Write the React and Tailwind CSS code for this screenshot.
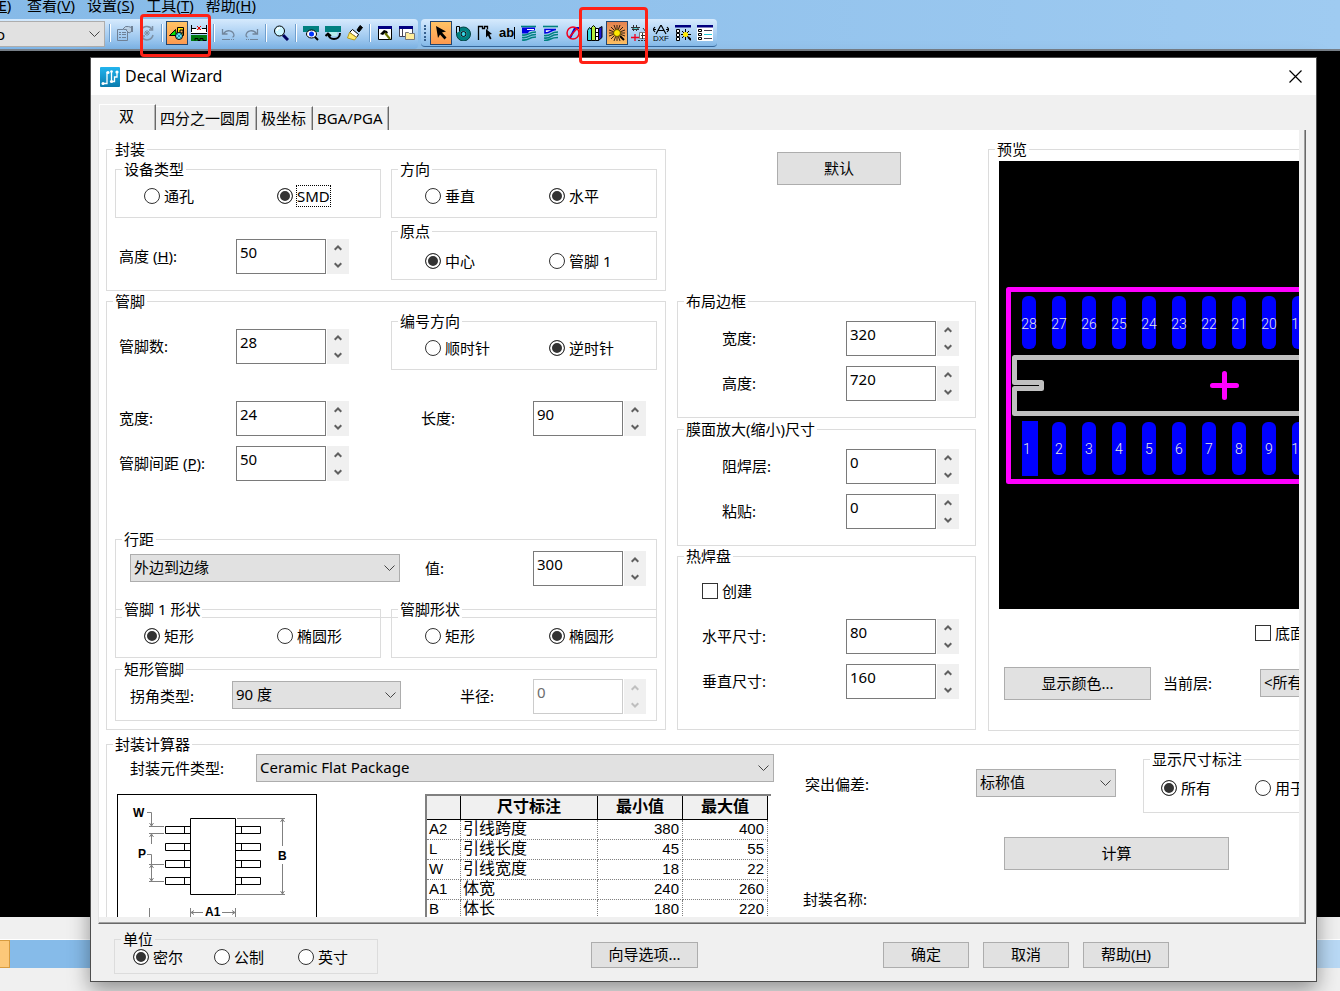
import React, { useState } from 'react'

const icons = {
  properties: (
    <g fill="none" stroke="#6f8196">
      <path d="M.5 4.500h10v11H.5zM2 7.500h2M5 7.500h4M2 9.500h2M5 9.500h4M2 12.500h2M5 12.500h4" />
      <path d="M5.500 4.500l3-3h3l3 1M9 5l3 3 2.500-1.500V1.500" fill="#b9cde0" />
      <path d="M15 1v6" strokeWidth="2" />
    </g>
  ),
  refresh: (
    <g fill="none" stroke="#7d90a5" strokeWidth="1.500">
      <path d="M2 6a6 6 0 0 1 11-1.500M14 10a6 6 0 0 1-11 2" />
      <path d="M13.500 1v4H10M2.500 15v-4H6" />
      <path d="M8 5v6M5 8h6M6 6l4 4M10 6l-4 4" strokeWidth="1" />
    </g>
  ),
  shapes: (
    <g stroke="#000">
      <path d="M8.500 2.500h6v8h-6z" fill="#ffe800" />
      <path d="M11 5h3v3h-3z" fill="#fcb45c" />
      <path d="M.5 10.500l6-6 1 6z" fill="#00e000" />
      <circle cx="10" cy="11" r="3.500" fill="#5fe3f5" />
      <path d="M8 9l4 4M12 9l-4 4" stroke="#007c8c" strokeWidth=".7" />
    </g>
  ),
  board: (
    <g fill="none" stroke="#000">
      <path d="M0 4h16v4H0z" fill="#fff" stroke="none" />
      <path d="M.5 0v7M15.500 0v7M0 3.500h5M11 3.500h5M0 8.500h16" />
      <path d="M6 1l4 4M10 1L6 5M8 2v3" stroke="#e00000" />
      <path d="M0 10h16v6H0z" fill="#007a10" stroke="none" />
      <path d="M4 15.500v-2h3v2h2v-2h3v2h3" />
    </g>
  ),
  undo: (
    <g fill="none" stroke="#71859b">
      <path d="M2 9l1-1a5.500 5 0 0 1 10 2c0 1-.5 2-1.500 2M1.500 4v5h5" strokeWidth="1.300" />
      <path d="M1 14.500h8M10 14.500h1M12 14.500h1" />
    </g>
  ),
  redo: (
    <g fill="none" stroke="#71859b">
      <path d="M14 9l-1-1A5.500 5 0 0 0 3 10c0 1 .5 2 1.500 2M14.500 4v5h-5" strokeWidth="1.300" />
      <path d="M15 14.500H7M6 14.500H5M4 14.500H3" />
    </g>
  ),
  zoom: (
    <g fill="none">
      <path d="M10 10l5 5" stroke="#000060" strokeWidth="3" />
      <circle cx="6.500" cy="6" r="5" fill="#c9f4ff" stroke="#000" />
      <path d="M4 6a3 3 0 0 1 3-3" stroke="#fff" strokeWidth="1.500" />
    </g>
  ),
  layerView: (
    <g>
      <path d="M0 1h16v6H0z" fill="#008080" />
      <ellipse cx="8.500" cy="9" rx="5" ry="4" fill="#fff" stroke="#000" />
      <circle cx="8.500" cy="9" r="2.500" fill="#0033ff" />
      <path d="M12 12l3 3" stroke="#000" strokeWidth="2" />
    </g>
  ),
  layerTurn: (
    <g>
      <path d="M0 1h16v6H0z" fill="#008080" />
      <path d="M4 7h8v4H4z" fill="#b7eded" />
      <path d="M3 8c0 8 12 8 12 0M.5 11L3 8.500 6 11" fill="none" stroke="#000" strokeWidth="2" />
    </g>
  ),
  brush: (
    <g stroke="#000">
      <path d="M10 5l3-4.500 2.500 2L12 7z" fill="#000" />
      <path d="M5.500 4.500l6 5-2 3-7-5z" fill="#fff" />
      <path d="M2.500 7.500l7 5-2 2.500L.5 13z" fill="#ffe96b" stroke="#b59a20" />
    </g>
  ),
  hammer: (
    <g>
      <path d="M1.500 2.500h13v12h-13z" fill="#fff" stroke="#000" />
      <path d="M1 1h14v3H1z" fill="#000080" />
      <path d="M3 9l4-4 3 1 1 2-2 1-1-1-2 2z" fill="#000" />
      <path d="M8 8l5 6" stroke="#6c7700" strokeWidth="2" />
    </g>
  ),
  windowFolder: (
    <g>
      <path d="M.5 1.500h13v10H.5z" fill="#fff" stroke="#445" />
      <path d="M0 1h14v3H0z" fill="#000080" />
      <path d="M3.500 4v8" stroke="#445" />
      <path d="M6.500 14.500v-7h3l1 1h5v6z" fill="#ffed9a" stroke="#777" />
    </g>
  ),
  pointer: <path d="M3 1l10 5.500-4 1 4.500 5-2 2L7 9.500 5 13z" fill="#000" />,
  donut: (
    <g fill="none">
      <circle cx="8.500" cy="9" r="5" stroke="#008080" strokeWidth="4" />
      <circle cx="8.500" cy="9" r="2.500" fill="#38d4e4" stroke="#000" />
      <circle cx="8.500" cy="9" r="7" stroke="#003f3f" />
      <path d="M1.500 8V1.500h3v5" fill="#b9dcf7" stroke="#000" />
    </g>
  ),
  outline: (
    <g fill="none" stroke="#000">
      <path d="M1.500 15V1.500h4v2h2v-2h3v3" strokeWidth="1.300" />
      <path d="M9 4l6 5-2.500.5 2 4-1.500 1-2-4-2 2z" fill="#000" stroke="none" />
    </g>
  ),
  flood: (
    <g fill="none" stroke="#008080" strokeWidth="1.600">
      <path d="M0 1.500h15" />
      <path d="M1 2.500h13v3c-4 0-6 0-7 3H1z" fill="#0000e0" stroke="none" />
      <path d="M6 4.500h7" stroke="#fff" strokeWidth="1" />
      <path d="M1 10c8 1 5-3 14-3M1 12.500c8 1 5-3 14-3M1 15c8 1 5-3 14-3" />
    </g>
  ),
  floodAlt: (
    <g fill="none" stroke="#008080" strokeWidth="1.600">
      <path d="M0 1.500h15" />
      <path d="M2 8V4.500h11c-5 0-5 3.500-11 3.500z" fill="#fff" stroke="#0000e0" />
      <path d="M1 10.500c8 1 5-3.500 14-3.500M1 13c8 1 5-3.500 14-3.500M1 15.500c8 0 5-3 14-3" />
    </g>
  ),
  forbid: (
    <g fill="none">
      <path d="M5 13L10 3h4" stroke="#0000d0" strokeWidth="2" />
      <circle cx="8" cy="8" r="6" stroke="#f00020" strokeWidth="1.500" />
      <path d="M12 3.500L4 12.500" stroke="#f00020" strokeWidth="1.500" />
    </g>
  ),
  books: (
    <g stroke="#000">
      <path d="M.5 5.500l2-3 2 2v11h-4z" fill="#37d7dc" />
      <path d="M4.500 2.500l2-2 2 2v13h-4z" fill="#b7ef3e" />
      <path d="M8.500 3.500h3v12h-3z" fill="#fff" />
      <path d="M11.500 3.500l3.500-2v11l-3.500 3z" fill="#1a1ad0" />
      <path d="M9 7.500h2M9 11.500h2" />
    </g>
  ),
  spark: (
    <g>
      <path d="M8 0v16M0 8h16M2 2l12 12M14 2L2 14M5 0l6 16M11 0L5 16M0 5l16 6M0 11l16-6" stroke="#000" strokeWidth=".8" />
      <circle cx="8" cy="8" r="3.500" fill="#ffe900" stroke="#6c5000" />
      <path d="M11 11l4 4" stroke="#000" strokeWidth="2" />
    </g>
  ),
  wizardParts: (
    <g fill="none" stroke="#333">
      <path d="M8.500 7.500h6v6h-6z" fill="#fff" stroke="#777" />
      <path d="M0 2.500h9M1 4.500h7M2.500 0v6M5.500 0v6M12 3l3 4M10 10.500h4M11.500 8v6" />
      <path d="M2 2.500h5v2H2z" fill="#52d6d6" />
      <path d="M0 12.500h8M4 9v7" stroke="#f00020" strokeWidth="1.300" />
      <path d="M7 15.500h9" strokeDasharray="2 1" />
    </g>
  ),
  dxf: (
    <g>
      <path d="M0 4.500h3M13 4.500h3M8 0L3 9M8 0l5 9M5 5.500h6M2 2l-2 2.500L2 7M14 2l2 2.500L14 7" fill="none" stroke="#000" strokeWidth="1.200" />
      <text x="8" y="16" textAnchor="middle" fontSize="8" fontFamily="Liberation Sans, sans-serif">DXF</text>
    </g>
  ),
  listSpark: (
    <g>
      <path d="M0 0h16v2.500H0z" fill="#000080" />
      <path d="M1.500 4.500h3v3h-3zM1.500 8.500h3v3h-3zM1.500 12.500h3v3h-3z" fill="#fff" stroke="#000" />
      <path d="M10.500 4v11M6 9.500h10M7 6l7 7M14 6l-7 7" stroke="#000" />
      <circle cx="10.500" cy="9.500" r="2.500" fill="#ffe900" />
      <path d="M13 12l3 3" stroke="#000" strokeWidth="2" />
    </g>
  ),
  list: (
    <g>
      <path d="M0 0h16v16H0z" fill="#fff" />
      <path d="M0 0h16v2.500H0z" fill="#000080" />
      <path d="M1.500 4.500h3v2h-3zM1.500 8.500h3v2h-3zM1.500 12.500h3v2h-3z" fill="#fff" stroke="#000" />
      <path d="M7 5.500h8M7 13.500h8" stroke="#445" />
      <path d="M7 9.500h8" stroke="#20c8d8" />
    </g>
  ),
}

const mainTools = [
  ['properties', 'refresh'],
  ['shapes', 'board'],
  ['undo', 'redo'],
  ['zoom'],
  ['layerView', 'layerTurn', 'brush'],
  ['hammer', 'windowFolder'],
]

const drawTools = [
  'pointer', 'donut', 'outline', 'text', 'flood', 'floodAlt', 'forbid',
  'books', 'spark', 'wizardParts', 'dxf', 'listSpark', 'list',
]

const activeTools = {
  shapes: 'border border-[#24466e] bg-gradient-to-b from-[#ffc365] to-[#ff9a50]',
  pointer: 'border border-[#24466e] bg-gradient-to-b from-[#ffc365] to-[#ff9a50]',
  spark: 'border border-[#24466e] bg-gradient-to-b from-[#e58350] to-[#fdbf62]',
}

const dimensions = [
  ['A2', '引线跨度', 380, 400],
  ['L', '引线长度', 45, 55],
  ['W', '引线宽度', 18, 22],
  ['A1', '体宽', 240, 260],
  ['B', '体长', 180, 220],
]

function ToolButton({ name }) {
  return (
    <button
      aria-label={name}
      className={`flex h-6 w-[22px] shrink-0 items-center justify-center ${activeTools[name] || ''}`}
    >
      {name === 'text' ? (
        <span className="border-r border-black font-['Liberation_Sans',sans-serif] text-[13px] leading-3 font-bold">ab</span>
      ) : (
        <svg className="h-4 w-4 shrink-0" viewBox="0 0 16 16">{icons[name]}</svg>
      )}
    </button>
  )
}

function MenuItem({ text, hotkey, className = '' }) {
  return (
    <button className={`whitespace-nowrap ${className}`}>
      {text}(<u>{hotkey}</u>)
    </button>
  )
}

function Group({ title, legendClass = 'bg-white', className = '', bodyClass = '', children }) {
  return (
    <fieldset className={`min-w-0 border border-[#dcdcdc] ${className}`}>
      <legend className={`ml-1.5 px-0.5 leading-[19px] whitespace-nowrap ${legendClass}`}>{title}</legend>
      <div className={bodyClass}>{children}</div>
    </fieldset>
  )
}

function Radio({ name, label, checked, focused, className = '' }) {
  return (
    <label className={`flex h-5 shrink-0 items-center gap-1 whitespace-nowrap ${className}`}>
      <input
        type="radio"
        name={name}
        defaultChecked={checked}
        className="h-4 w-4 shrink-0 appearance-none rounded-full border border-[#333] bg-white checked:bg-[#333] checked:shadow-[inset_0_0_0_2px_#fff]"
      />
      <span className={focused ? 'outline-1 outline-dotted outline-black' : ''}>{label}</span>
    </label>
  )
}

function Check({ label, className = '' }) {
  return (
    <label className={`flex h-5 items-center gap-1 whitespace-nowrap ${className}`}>
      <input type="checkbox" className="h-4 w-4 shrink-0 appearance-none border border-[#333] bg-white checked:bg-[#333]" />
      {label}
    </label>
  )
}

function Arrow({ up }) {
  return (
    <svg className="h-[6px] w-2" viewBox="0 0 8 6" fill="none" stroke="currentColor" strokeWidth="2">
      <path d={up ? 'M.7 4.700L4 1.500l3.300 3.200' : 'M.7 1.300L4 4.500l3.300-3.200'} />
    </svg>
  )
}

function Spin({ id, label, value, labelClass, disabled }) {
  const [current, setCurrent] = useState(value)
  return (
    <div className="flex h-[35px] items-center">
      <label htmlFor={id} className={`shrink-0 pb-px whitespace-nowrap ${labelClass}`}>{label}</label>
      <input
        id={id}
        type="text"
        value={current}
        disabled={disabled}
        onChange={(e) => setCurrent(e.target.value)}
        className="h-[35px] w-[90px] shrink-0 border border-[#7a7a7a] bg-white pb-2.5 pl-[3px] disabled:border-[#ccc] disabled:text-[#6d6d6d]"
      />
      <span className={`ml-px flex h-[35px] w-[22px] shrink-0 flex-col bg-[#f0f0f0] ${disabled ? 'text-[#bfbfbf]' : 'text-[#606060]'}`}>
        <button aria-label="+" disabled={disabled} onClick={() => setCurrent(Number(current) + 1)} className="flex flex-1 items-center justify-center">
          <Arrow up />
        </button>
        <button aria-label="-" disabled={disabled} onClick={() => setCurrent(Number(current) - 1)} className="flex flex-1 items-center justify-center">
          <Arrow />
        </button>
      </span>
    </div>
  )
}

function Select({ id, options, label, className = '' }) {
  return (
    <span className={`relative block h-7 shrink-0 ${className}`}>
      <select id={id} aria-label={label} className="h-full w-full appearance-none border border-[#adadad] bg-[#e1e1e1] pb-0.5 pl-[3px]">
        {options.map((o) => <option key={o}>{o}</option>)}
      </select>
      <svg className="pointer-events-none absolute top-[11px] right-[5px] h-[6px] w-[11px]" viewBox="0 0 11 6" fill="none" stroke="#444">
        <path d="M.5.5l5 5 5-5" />
      </svg>
    </span>
  )
}

function Button({ children, className = '' }) {
  return (
    <button className={`shrink-0 border border-[#adadad] bg-[#e1e1e1] pb-0.5 whitespace-nowrap ${className}`}>
      {children}
    </button>
  )
}

function DecalPreview() {
  const columns = Array.from({ length: 14 }, (_, i) => i)
  return (
    <svg className="h-[448px] w-[450px] bg-black" viewBox="0 0 450 448">
      <rect x="9.500" y="128.500" width="431" height="192" fill="none" stroke="#f0f" strokeWidth="5" strokeLinejoin="round" />
      <path d="M434.500 196.500H15.500V221.500H42.500V227.500H15.500V252.500H434.500z" fill="none" stroke="#c0c0c0" strokeWidth="5" strokeLinejoin="round" />
      <path d="M213.500 224.500h24M225.500 212.500v24" stroke="#f0f" strokeWidth="5" strokeLinecap="round" />
      <g fill="#00f">
        {columns.map((i) => (
          <rect key={i} x={23 + i * 30} y="135" width="14" height="53" rx="6" />
        ))}
        <rect x="23" y="260" width="16" height="55" />
        {columns.slice(1).map((i) => (
          <rect key={i} x={23 + i * 30} y="261" width="14" height="53" rx="6" />
        ))}
      </g>
      <g fill="#e4e4e4" fontSize="14" fontWeight="300" fontFamily="Roboto, sans-serif" textAnchor="middle">
        {columns.map((i) => (
          <text key={i} x={30 + i * 30} y="168">{28 - i}</text>
        ))}
        {columns.map((i) => (
          <text key={i} x={(i ? 30 : 28) + i * 30} y="293">{i + 1}</text>
        ))}
      </g>
    </svg>
  )
}

function PackageDrawing() {
  return (
    <svg className="h-[160px] w-[200px] shrink-0 border border-black bg-white" viewBox="1 1 198 158">
      <g fill="none" stroke="#000">
        <path d="M73.500 24.500h45v76h-45z" />
        {[32.5, 49.5, 66.5, 83.5].map((y) => (
          <path key={y} d={`M73.500 ${y}h-25v7h25M67.500 ${y}v7M118.500 ${y}h25v7h-25M124.500 ${y}v7`} />
        ))}
      </g>
      <g fill="none" stroke="#808080">
        <path d="M30 18.500h4.500V32M32 32.500h15M32 39.500h15M34.500 40v10" />
        <path d="M30 60.500h4.500V87M32 70.500h15M32 87.500h15" />
        <path d="M120 24.500h48M120 100.500h48M165.500 25v27M165.500 70v30" />
        <path d="M73.500 114v9M118.500 114v9M74 118.500h12M105 118.500h13M32.500 114v20" />
        <path d="M32.500 29l2 3 2-3M32.500 43l2-3 2 3M32.500 74l2-3 2 3M32.500 84l2 3 2-3" />
        <path d="M163.500 28l2-3 2 3M163.500 97l2 3 2-3M77 116.500l-3 2 3 2M115 116.500l3 2-3 2" />
      </g>
      <g fontSize="12" fontWeight="700" fontFamily="Liberation Sans, sans-serif">
        <text x="16" y="23">W</text>
        <text x="21" y="64">P</text>
        <text x="161" y="66">B</text>
        <text x="88" y="122">A1</text>
      </g>
    </svg>
  )
}

function DimensionTable() {
  return (
    <div className="border-t-2 border-l-2 border-[#808080] bg-white pr-[3px]">
      <table className="w-[341px] table-fixed border-separate border-spacing-0 font-['Liberation_Sans','Noto_Sans_CJK_SC',sans-serif] leading-[18px]">
        <thead>
          <tr className="h-6 bg-[#f0f0f0] text-base leading-[18px]">
            <th className="w-[34px] border-r border-b border-black" />
            <th className="w-[137px] border-r border-b border-black pb-0.5">尺寸标注</th>
            <th className="w-[85px] border-r border-b border-black pb-0.5">最小值</th>
            <th className="w-[85px] border-r border-b border-black pb-0.5">最大值</th>
          </tr>
        </thead>
        <tbody>
          {dimensions.map(([code, name, min, max]) => (
            <tr key={code} className="h-5">
              <td className="border-r border-b border-dotted border-[#808080] pb-px pl-0.5">{code}</td>
              <td className="border-r border-b border-dotted border-[#808080] pb-px pl-0.5 text-base leading-[18px]">{name}</td>
              <td className="border-r border-b border-dotted border-[#808080] pr-[3px] pb-px text-right">{min}</td>
              <td className="border-r border-b border-dotted border-[#808080] pr-[3px] pb-px text-right">{max}</td>
            </tr>
          ))}
        </tbody>
      </table>
    </div>
  )
}

function PackageGroup() {
  return (
    <Group title="封装" bodyClass="px-2 pt-px pb-2.5">
      <div className="grid grid-cols-2 gap-x-2.5 gap-y-1">
        <Group title="设备类型" bodyClass="flex pt-[7px] pb-[11px] pl-7">
          <Radio name="device" label="通孔" className="w-[133px]" />
          <Radio name="device" label="SMD" checked focused />
        </Group>
        <Group title="方向" bodyClass="flex pt-[7px] pb-[11px] pl-[33px]">
          <Radio name="orientation" label="垂直" className="w-[124px]" />
          <Radio name="orientation" label="水平" checked />
        </Group>
        <div className="pt-[17px] pl-1">
          <Spin id="height" label={<>高度 (<u>H</u>):</>} value="50" labelClass="w-[117px]" />
        </div>
        <Group title="原点" bodyClass="flex pt-2.5 pb-2 pl-[33px]">
          <Radio name="origin" label="中心" checked className="w-[124px]" />
          <Radio name="origin" label="管脚 1" />
        </Group>
      </div>
    </Group>
  )
}

function PinGroup() {
  return (
    <Group title="管脚" className="mt-px" bodyClass="px-2 pt-px pb-2">
      <div className="grid grid-cols-2 gap-x-2.5">
        <div className="pt-[17px] pl-1">
          <Spin id="pin-count" label="管脚数:" value="28" labelClass="w-[117px]" />
        </div>
        <Group title="编号方向" bodyClass="flex pt-[7px] pb-[11px] pl-[33px]">
          <Radio name="numbering" label="顺时针" className="w-[124px]" />
          <Radio name="numbering" label="逆时针" checked />
        </Group>
      </div>

      <div className="mt-[31px] grid grid-cols-2 gap-x-2.5 gap-y-2.5">
        <div className="pl-1">
          <Spin id="pin-width" label="宽度:" value="24" labelClass="w-[117px]" />
        </div>
        <div className="pl-[30px]">
          <Spin id="pin-length" label="长度:" value="90" labelClass="w-[112px]" />
        </div>
        <div className="pl-1">
          <Spin id="pin-pitch" label={<>管脚间距 (<u>P</u>):</>} value="50" labelClass="w-[117px]" />
        </div>
      </div>

      <Group title="行距" className="mt-[49px]" bodyClass="flex items-start pt-0.5 pb-[31px] pl-3.5">
        <Select label="行距" options={['外边到边缘', '中心到中心', '内边到边缘']} className="mt-[3px] w-[270px]" />
        <div className="ml-[25px]">
          <Spin id="row-value" label="值:" value="300" labelClass="w-[108px]" />
        </div>
      </Group>

      {/* the shape groups sit over the bottom edge of the row pitch group */}
      <div className="-mt-[18px] grid grid-cols-2 gap-x-2.5">
        <Group title="管脚 1 形状" bodyClass="flex pt-[7px] pb-[11px] pl-7">
          <Radio name="pin1-shape" label="矩形" checked className="w-[133px]" />
          <Radio name="pin1-shape" label="椭圆形" />
        </Group>
        <Group title="管脚形状" bodyClass="flex pt-[7px] pb-[11px] pl-[33px]">
          <Radio name="pin-shape" label="矩形" className="w-[124px]" />
          <Radio name="pin-shape" label="椭圆形" checked />
        </Group>
      </div>

      <Group title="矩形管脚" className="mt-0.5" bodyClass="flex items-start pb-1.5 pl-3.5">
        <label htmlFor="corner" className="w-[102px] leading-[34px]">拐角类型:</label>
        <Select id="corner" options={['90 度', '倒角', '圆角']} className="mt-0.5 w-[169px]" />
        <div className="ml-[59px]">
          <Spin id="radius" label="半径:" value="0" labelClass="w-[73px]" disabled />
        </div>
      </Group>
    </Group>
  )
}

function OutlineColumn() {
  return (
    <div className="flex flex-col">
      <Button className="mt-3 ml-[100px] h-[33px] w-[124px]">默认</Button>
      <Group title="布局边框" className="mt-[107px]" bodyClass="flex flex-col gap-2.5 pt-2.5 pb-4 pl-11">
        <Spin id="outline-width" label="宽度:" value="320" labelClass="w-[124px]" />
        <Spin id="outline-height" label="高度:" value="720" labelClass="w-[124px]" />
      </Group>
      <Group title="膜面放大(缩小)尺寸" className="mt-0.5" bodyClass="flex flex-col gap-2.5 pt-2.5 pb-4 pl-11">
        <Spin id="solder-mask" label="阻焊层:" value="0" labelClass="w-[124px]" />
        <Spin id="paste" label="粘贴:" value="0" labelClass="w-[124px]" />
      </Group>
      <Group title="热焊盘" className="mt-px" bodyClass="pt-[15px] pb-[30px] pl-6">
        <Check label="创建" />
        <div className="mt-[18px] flex flex-col gap-2.5">
          <Spin id="thermal-x" label="水平尺寸:" value="80" labelClass="w-[144px]" />
          <Spin id="thermal-y" label="垂直尺寸:" value="160" labelClass="w-[144px]" />
        </div>
      </Group>
    </div>
  )
}

function PreviewGroup() {
  return (
    <Group title="预览" bodyClass="pt-0.5 pb-[30px] pl-2.5">
      <DecalPreview />
      <Check label="底面视图" className="mt-3.5 ml-64" />
      <div className="mt-6 flex items-start pl-[5px]">
        <Button className="h-[33px] w-[147px]">显示颜色...</Button>
        <label htmlFor="layer" className="ml-3 w-[97px] leading-[33px]">当前层:</label>
        <Select id="layer" options={['<所有层>']} className="mt-0.5 w-[150px]" />
      </div>
    </Group>
  )
}

function Calculator() {
  return (
    <Group title="封装计算器" className="mt-1" bodyClass="flex items-start">
      <div className="w-[667px] shrink-0">
        <div className="flex items-center pl-[23px]">
          <label htmlFor="package-type" className="w-[126px]">封装元件类型:</label>
          <Select id="package-type" options={['Ceramic Flat Package']} className="w-[518px]" />
        </div>
        <div className="mt-3 flex items-start gap-[108px] pl-2.5">
          <PackageDrawing />
          <DimensionTable />
        </div>
      </div>

      <div>
        <div className="flex items-start pl-[31px]">
          <label htmlFor="deviation" className="w-[171px] pt-4 leading-7">突出偏差:</label>
          <Select id="deviation" options={['标称值', '最小值', '最大值']} className="mt-[15px] w-[140px]" />
          <Group title="显示尺寸标注" className="-mt-1 ml-[27px] w-[300px]" bodyClass="flex pt-[9px] pb-3.5 pl-[17px]">
            <Radio name="show-dims" label="所有" checked className="w-[94px]" />
            <Radio name="show-dims" label="用于计算" />
          </Group>
        </div>
        <Button className="mt-6 ml-[230px] block h-[33px] w-[225px]">计算</Button>
        <p className="mt-[19px] ml-[29px] leading-5">封装名称:</p>
      </div>
    </Group>
  )
}

function Tabs() {
  const [selected, setSelected] = useState('双')
  const tabs = ['双', '四分之一圆周', '极坐标', 'BGA/PGA']
  return (
    <div role="tablist" className="flex h-[26px] items-end pl-px">
      {tabs.map((tab) => (
        <button
          key={tab}
          role="tab"
          aria-selected={tab === selected}
          onClick={() => setSelected(tab)}
          className={`border-t border-r border-t-white border-r-[#696969] whitespace-nowrap shadow-[inset_-1px_0_0_#b5b5b5] ${tab === selected ? 'h-[26px] border-l border-l-white pr-[21px] pb-1 pl-[19px]' : 'h-6 pr-1.5 pb-0.5 pl-1'}`}
        >
          {tab}
        </button>
      ))}
    </div>
  )
}

function DecalWizard() {
  return (
    <div role="dialog" aria-label="Decal Wizard" className="absolute top-[57px] right-[23px] bottom-[9px] left-[90px] flex flex-col border border-[#4d4d4d] bg-[#f0f0f0] shadow-[0_8px_20px_rgba(0,0,0,0.4)]">
      <div className="flex h-[37px] shrink-0 items-center bg-white pr-3.5 pl-[9px]">
        <svg className="h-5 w-5" viewBox="0 0 20 20">
          <defs>
            <linearGradient id="logo" x2="0" y2="1">
              <stop stopColor="#22b4ee" />
              <stop offset="1" stopColor="#0a7cae" />
            </linearGradient>
          </defs>
          <rect width="20" height="20" rx="1" fill="url(#logo)" />
          <path d="M3 16.500h4V5.500h1.500M11.500 4v10.500M11.500 14.500h3V10h2.500V5" fill="none" stroke="#fff" strokeWidth="1.300" />
          <g fill="#fff">
            <circle cx="3" cy="16.500" r="1.500" />
            <circle cx="8" cy="5.500" r="1.500" />
            <circle cx="11.500" cy="14.500" r="1.600" />
            <circle cx="11.500" cy="4.500" r="1.300" />
            <circle cx="17" cy="5" r="1.600" />
          </g>
        </svg>
        <h1 className="ml-[5px] pb-0.5 text-base">Decal Wizard</h1>
        <button aria-label="Close" className="ml-auto">
          <svg className="h-[13px] w-[13px]" viewBox="0 0 13 13" stroke="#000" strokeWidth="1.200">
            <path d="M.5.5l12 12M12.500.5l-12 12" />
          </svg>
        </button>
      </div>

      <div className="flex min-h-0 flex-1 flex-col pt-[9px] pr-2.5 pl-[7px]">
        <Tabs />
        <div className="flex min-h-0 flex-1 border-r border-b border-l border-r-[#696969] border-b-[#696969] border-l-[#e3e3e3]">
          <div className="flex min-w-0 flex-1 border-r border-b border-[#a0a0a0] pr-[5px] pb-[5px]">
            <div className="min-w-0 flex-1 overflow-hidden bg-white pt-2.5 pl-[7px]">
              <div className="min-w-[1354px]">
                <div className="grid grid-cols-[560px_299px_minmax(472px,1fr)] items-start gap-x-[11px]">
                  <div>
                    <PackageGroup />
                    <PinGroup />
                  </div>
                  <OutlineColumn />
                  <div className="pl-px">
                    <PreviewGroup />
                  </div>
                </div>
                <Calculator />
              </div>
            </div>
          </div>
        </div>
      </div>

      <div className="flex h-[57px] shrink-0 items-start pt-1.5 pr-[147px] pl-[23px]">
        <Group title="单位" legendClass="bg-[#f0f0f0]" className="h-11 w-[264px] shrink-0" bodyClass="flex h-4 items-center pl-[18px]">
          <Radio name="unit" label="密尔" checked className="w-[81px]" />
          <Radio name="unit" label="公制" className="w-[84px]" />
          <Radio name="unit" label="英寸" />
        </Group>
        <Button className="mt-3 ml-[213px] h-[26px] w-[107px]">向导选项...</Button>
        <div className="mt-3 ml-auto flex gap-3.5">
          <Button className="h-[26px] w-[86px]">确定</Button>
          <Button className="h-[26px] w-[86px]">取消</Button>
          <Button className="h-[26px] w-[86px]">帮助(<u>H</u>)</Button>
        </div>
      </div>
    </div>
  )
}

export default function App() {
  return (
    <div className="relative flex h-screen flex-col overflow-hidden bg-black font-['Noto_Sans','Noto_Sans_CJK_SC',sans-serif] text-[15px] leading-5 text-black">
      <div className="shrink-0 border-b-2 border-[#777f88] bg-gradient-to-r from-[#86bae8] to-[#9fcbf1]">
        <nav className="flex h-[19px] items-end gap-3 overflow-hidden pb-1 leading-5">
          <MenuItem text="" hotkey="E" className="-ml-1.5 w-[21px] text-left" />
          <MenuItem text="查看" hotkey="V" />
          <MenuItem text="设置" hotkey="S" />
          <MenuItem text="工具" hotkey="T" />
          <MenuItem text="帮助" hotkey="H" />
        </nav>
        <div className="flex items-start gap-[3px]">
          <div className="flex h-[30px] items-start rounded-r bg-gradient-to-b from-[#d6eafd] to-[#7db4e6] pt-0.5">
            <div className="relative mr-px h-[26px] w-[105px]">
              <input aria-label="Layer" defaultValue="o" className="h-full w-full border border-l-0 border-[#adadad] bg-[#e1e1e1] pr-5 leading-5 -indent-1" />
              <svg className="absolute top-2.5 right-[5px] h-[6px] w-[11px]" viewBox="0 0 11 6" fill="none" stroke="#444">
                <path d="M.5.5l5 5 5-5" />
              </svg>
            </div>
            {mainTools.map((group) => (
              <div key={group[0]} className="flex items-center">
                <span className="mr-1 ml-[3px] h-[18px] w-px bg-[#6f9fce] shadow-[1px_0_0_#fff]" />
                {group.map((name) => <ToolButton key={name} name={name} />)}
              </div>
            ))}
          </div>
          <div className="flex h-7 items-start rounded border-b border-[#36689c] bg-gradient-to-b from-[#d6eafd] to-[#86bbea] pt-0.5 pr-px">
            <span className="mt-1 mr-1 ml-[3px] h-4 border-l-2 border-dotted border-[#355f8e]" />
            {drawTools.map((name) => <ToolButton key={name} name={name} />)}
          </div>
        </div>
      </div>

      <div className="flex-1 bg-black" />
      <div className="h-[23px] shrink-0 border-b border-white bg-[#f0f0f0]" />
      <div className="flex h-7 shrink-0 justify-between bg-[#b9d9f5]">
        <div className="w-1/2 bg-[#86bbe9]">
          <div className="h-full w-2.5 border border-l-0 border-[#d79b3f] bg-[#fcc879]" />
        </div>
      </div>
      <div className="h-[23px] shrink-0 bg-[#f0f0f0]" />

      <DecalWizard />

      {/* red callouts over the toolbar */}
      <div className="pointer-events-none absolute top-3.5 left-[140px] h-[43px] w-[71px] rounded border-[3px] border-[#ff2116]" />
      <div className="pointer-events-none absolute top-[7px] left-[579px] h-[57px] w-[69px] rounded border-[3px] border-[#ff2116]" />
    </div>
  )
}
